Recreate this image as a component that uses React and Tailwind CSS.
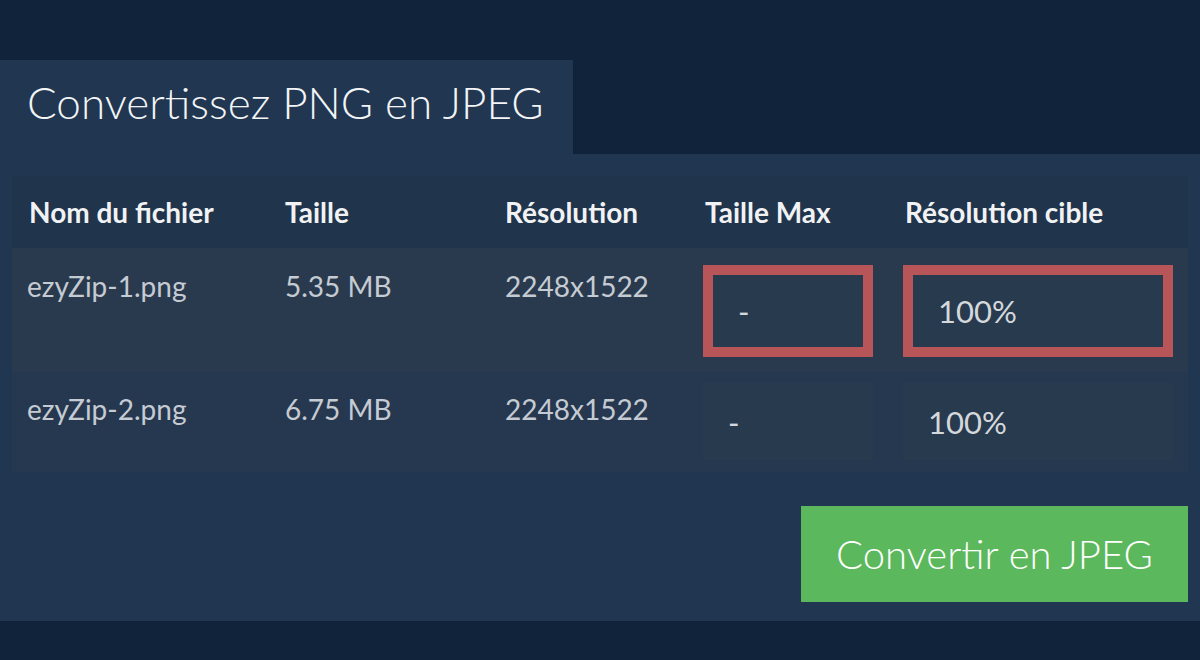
import React from 'react';

// --- DATA ---
const files = [
  { name: 'ezyZip-1.png', size: '5.35 MB', res: '2248x1522', max: '-', target: '100%', active: true },
  { name: 'ezyZip-2.png', size: '6.75 MB', res: '2248x1522', max: '-', target: '100%', active: false },
];

const cols = 'grid grid-cols-[256px_220px_200px_200px_300px]';

function ValueBox({ value, active, wide }) {
  return (
    <div
      className={`flex items-center bg-[#283a4d] text-[#d4d8dd] text-[31px] pl-[25px] ${wide ? 'w-[270px]' : 'w-[170px]'} ${active ? 'h-[92px] border-[10px] border-[#b85558]' : 'h-[77px]'}`}
    >
      {value}
    </div>
  );
}

export default function App() {
  return (
    <div className="w-[1200px] h-[660px] bg-[#10233a] pt-[60px] font-['Lato','Liberation_Sans',sans-serif] overflow-hidden">
      {/* tab */}
      <div className="w-[573px] h-[94px] bg-[#213650] flex items-center pl-[27px] pb-[10px]">
        <h1 className="text-[44px] font-light text-[#f2f4f6] leading-none">Convertissez PNG en JPEG</h1>
      </div>

      {/* panel */}
      <div className="bg-[#213650] h-[467px] px-[12px] pt-[22px]">
        <div className="w-[1176px]">
          <div className={`${cols} h-[72px] items-center bg-[#20344b] text-[#f0f2f4] text-[28px] font-bold`}>
            <div className="pl-[17px]">Nom du fichier</div>
            <div className="pl-[17px]">Taille</div>
            <div className="pl-[17px]">Résolution</div>
            <div className="pl-[17px]">Taille Max</div>
            <div className="pl-[17px]">Résolution cible</div>
          </div>

          {files.map((f) => (
            <div
              key={f.name}
              className={`${cols} text-[#c5cbd2] text-[28px] leading-[36px] ${f.active ? 'h-[124px] bg-[#2a3a4e] pt-[17px]' : 'h-[100px] bg-[#263850] pt-[11px]'}`}
            >
              <div className={`pl-[15px] ${f.active ? 'pt-[3px]' : 'pt-[8px]'}`}>{f.name}</div>
              <div className={`pl-[17px] ${f.active ? 'pt-[3px]' : 'pt-[8px]'}`}>{f.size}</div>
              <div className={`pl-[17px] ${f.active ? 'pt-[3px]' : 'pt-[8px]'}`}>{f.res}</div>
              <div className="pl-[15px]">
                <ValueBox value={f.max} active={f.active} />
              </div>
              <div className="pl-[15px]">
                <ValueBox value={f.target} active={f.active} wide />
              </div>
            </div>
          ))}

          <div className="flex justify-end pt-[34px]">
            <button className="w-[387px] h-[96px] bg-[#5cb85c] text-white text-[40px] font-light">
              Convertir en JPEG
            </button>
          </div>
        </div>
      </div>
    </div>
  );
}
